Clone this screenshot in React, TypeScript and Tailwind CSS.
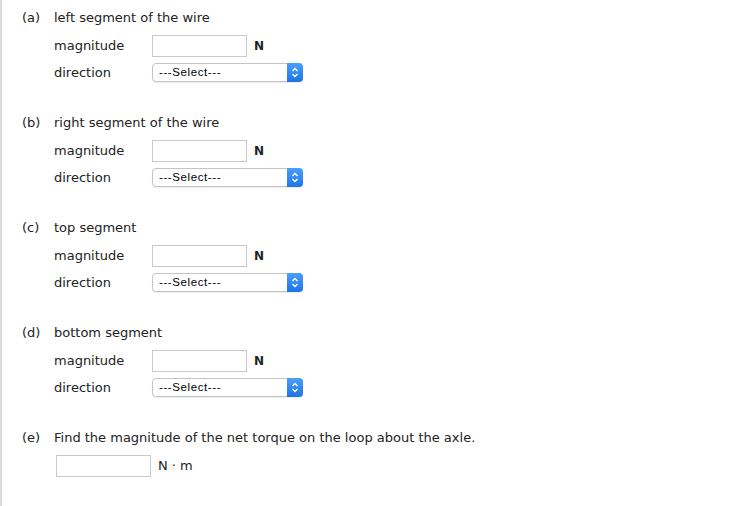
import React from "react";

type Part = { tag: string; title: string; kind: "force" | "torque" };

const PARTS: Part[] = [
  { tag: "(a)", title: "left segment of the wire", kind: "force" },
  { tag: "(b)", title: "right segment of the wire", kind: "force" },
  { tag: "(c)", title: "top segment", kind: "force" },
  { tag: "(d)", title: "bottom segment", kind: "force" },
  { tag: "(e)", title: "Find the magnitude of the net torque on the loop about the axle.", kind: "torque" },
];

function SelectBox() {
  return (
    <div className="flex h-[19px] w-[151px] items-stretch rounded-[4px] border border-[#c4c4c4] bg-white shadow-[0_1px_1px_rgba(0,0,0,0.08)]">
      <div className="flex flex-1 items-center pl-[6px] font-['Liberation_Sans',sans-serif] text-[11.5px] tracking-[0.6px] text-black">
        ---Select---
      </div>
      <div className="-my-px -mr-px flex w-[16px] items-center justify-center rounded-r-[4px] bg-gradient-to-b from-[#4aa0f8] to-[#1e73e8]">
        <svg width="8" height="11" viewBox="0 0 8 11" fill="none" stroke="white" strokeWidth="1.4">
          <path d="M1.5 4 L4 1.5 L6.5 4" />
          <path d="M1.5 7 L4 9.5 L6.5 7" />
        </svg>
      </div>
    </div>
  );
}

function TextBox({ w = "w-[95px]" }: { w?: string }) {
  return <div className={`h-[22px] ${w} border border-[#c8c8c8] bg-white`} />;
}

export default function App() {
  return (
    <div className="min-h-[506px] w-[734px] border-l-2 border-[#dcdcdc] bg-white font-['DejaVu_Sans',Verdana,sans-serif] text-[13px] text-[#222]">
      <div className="flex flex-col gap-[31px] pt-[9px]">
        {PARTS.map((p) => (
          <div key={p.tag}>
            <div className="flex h-[18px] items-center">
              <span className="w-[32px] pl-[20px] box-content">{p.tag}</span>
              <span>{p.title}</span>
            </div>
            {p.kind === "force" ? (
              <div className="mt-[8px] flex flex-col gap-[5px] pl-[52px]">
                <div className="flex h-[22px] items-center">
                  <span className="w-[98px]">magnitude</span>
                  <TextBox />
                  <span className="ml-[7px] font-bold text-[12px]">N</span>
                </div>
                <div className="flex h-[21px] items-center">
                  <span className="w-[98px]">direction</span>
                  <SelectBox />
                </div>
              </div>
            ) : (
              <div className="mt-[8px] flex h-[22px] items-center pl-[54px]">
                <TextBox />
                <span className="ml-[7px]">N · m</span>
              </div>
            )}
          </div>
        ))}
      </div>
    </div>
  );
}
